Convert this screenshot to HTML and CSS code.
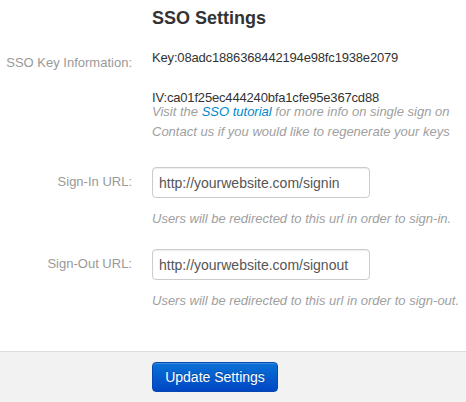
FILE: index.html
```html
<!DOCTYPE html>
<html>
<head>
<meta charset="utf-8">
<link rel="stylesheet" href="styles.css">
</head>
<body>
<form class="sso-form">
  <h3 class="title">SSO Settings</h3>
  <div class="group group-keys">
    <label class="label">SSO Key Information:</label>
    <div class="controls">
      <div class="keys">Key:08adc1886368442194e98fc1938e2079<br><br>IV:ca01f25ec444240bfa1cfe95e367cd88</div>
      <div class="help help-keys">Visit the <a class="link" href="#">SSO tutorial</a> for more info on single sign on<br>Contact us if you would like to regenerate your keys</div>
    </div>
  </div>
  <div class="group">
    <label class="label">Sign-In URL:</label>
    <div class="controls">
      <input class="field" type="text" value="http://yourwebsite.com/signin">
      <div class="help">Users will be redirected to this url in order to sign-in.</div>
    </div>
  </div>
  <div class="group">
    <label class="label">Sign-Out URL:</label>
    <div class="controls">
      <input class="field" type="text" value="http://yourwebsite.com/signout">
      <div class="help">Users will be redirected to this url in order to sign-out.</div>
    </div>
  </div>
  <div class="actions">
    <button class="btn-primary" type="button">Update Settings</button>
  </div>
</form>
</body>
</html>
```

FILE: styles.css
```css
html, body {
  margin: 0;
  padding: 0;
  background: #ffffff;
}
body {
  font-family: "Liberation Sans", Arial, sans-serif;
  font-size: 13px;
  line-height: 20px;
  color: #333333;
  width: 466px;
  height: 402px;
  overflow: hidden;
}
.sso-form {
  margin: 0;
}
.title {
  margin: 8px 0 20px 152px;
  font-size: 18px;
  line-height: 20px;
  font-weight: bold;
  color: #333333;
}
.group {
  display: grid;
  grid-template-columns: 132px 1fr;
  column-gap: 20px;
  margin-bottom: 20px;
}
.group-keys {
  margin-top: 0;
  margin-bottom: 25px;
}
.label {
  text-align: right;
  color: #999999;
  padding-top: 5px;
  line-height: 20px;
  white-space: nowrap;
}
.keys {
  color: #333333;
  line-height: 20px;
  letter-spacing: -0.17px;
}
.help {
  margin-top: 11px;
  color: #a0a0a0;
  font-style: italic;
  line-height: 20px;
  white-space: nowrap;
}
.help-keys {
  margin-top: -6px;
}
.link {
  color: #0088cc;
  text-decoration: none;
}
.field {
  display: block;
  box-sizing: border-box;
  width: 218px;
  height: 31px;
  margin: 0;
  padding: 5px 6px 4px;
  font-family: "Liberation Sans", Arial, sans-serif;
  font-size: 14px;
  line-height: 20px;
  color: #555555;
  background: #ffffff;
  border: 1px solid #cccccc;
  border-radius: 4px;
  box-shadow: inset 0 1px 1px rgba(0, 0, 0, 0.075);
}
.actions {
  margin-top: 40px;
  border-top: 1px solid #dddddd;
  background: #f2f2f2;
  padding: 10px 0 20px 152px;
}
.btn-primary {
  display: inline-block;
  box-sizing: border-box;
  height: 30px;
  width: 126px;
  padding: 4px 0;
  font-family: "Liberation Sans", Arial, sans-serif;
  font-size: 14px;
  line-height: 20px;
  color: #ffffff;
  text-shadow: 0 -1px 0 rgba(0, 0, 0, 0.25);
  background: linear-gradient(#0a72d6, #0046c4);
  border: 1px solid #0648b0;
  border-radius: 4px;
  box-shadow: inset 0 1px 0 rgba(255, 255, 255, 0.2);
  cursor: pointer;
}
```
